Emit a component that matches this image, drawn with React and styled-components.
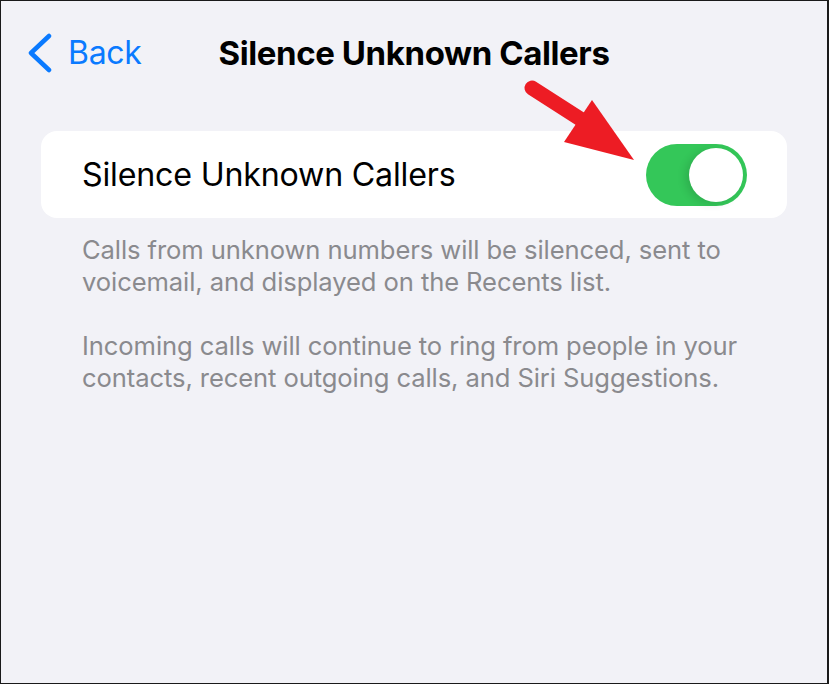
import React from "react";
import styled, { createGlobalStyle } from "styled-components";

const Global = createGlobalStyle`
  html, body { margin: 0; padding: 0; }
  body { background: #f2f2f7; font-family: Inter, "Liberation Sans", sans-serif; }
`;

const Frame = styled.div`
  position: relative;
  box-sizing: border-box;
  width: 829px;
  height: 684px;
  background: #f2f2f7;
  border: 1px solid #1a1a1a;
  border-right-width: 2px;
  display: flex;
  flex-direction: column;
  overflow: hidden;
`;

const NavBar = styled.header`
  display: grid;
  grid-template-columns: 1fr auto 1fr;
  align-items: center;
  height: 103px;
  padding: 0 27px;
`;

const BackButton = styled.button`
  display: flex;
  align-items: center;
  gap: 16px;
  justify-self: start;
  border: 0;
  background: none;
  padding: 0;
  color: #0a7aff;
  font-family: inherit;
  font-size: 32px;
  letter-spacing: -0.3px;
  cursor: pointer;
`;

const Title = styled.h1`
  margin: 0;
  font-size: 33px;
  font-weight: 700;
  letter-spacing: -0.4px;
  color: #000;
`;

const Content = styled.main`
  padding: 27px 40px 0 40px;
`;

const Card = styled.div`
  display: flex;
  align-items: center;
  justify-content: space-between;
  height: 87px;
  background: #fff;
  border-radius: 16px;
  padding: 0 40px 0 41px;
`;

const Label = styled.span`
  font-size: 32.2px;
  letter-spacing: -0.2px;
  color: #000;
`;

const Switch = styled.div`
  position: relative;
  width: 101px;
  height: 62px;
  border-radius: 31px;
  background: ${(p) => (p.$on ? "#34c759" : "#e9e9ea")};
`;

const Knob = styled.div`
  position: absolute;
  top: 4px;
  left: ${(p) => (p.$on ? "43px" : "4px")};
  width: 54px;
  height: 54px;
  border-radius: 50%;
  background: #fff;
  box-shadow: -4px 2px 8px rgba(0, 0, 0, 0.12);
`;

const Footer = styled.div`
  padding: 16px 0 0 41px;
  color: #8a8a8e;
  font-size: 25.6px;
  line-height: 32px;
  letter-spacing: -0.1px;
`;

const Para = styled.p`
  margin: 0 0 32px 0;
  white-space: nowrap;
`;

const Arrow = styled.svg`
  position: absolute;
  left: 0;
  top: 0;
  pointer-events: none;
`;

export default function App() {
  return (
    <>
      <Global />
      <Frame>
        <NavBar>
          <BackButton>
            <svg width="24" height="40" viewBox="0 0 24 40">
              <path
                d="M21 3 L3 20 L21 37"
                fill="none"
                stroke="#0a7aff"
                strokeWidth="4.5"
                strokeLinecap="round"
                strokeLinejoin="round"
              />
            </svg>
            Back
          </BackButton>
          <Title>Silence Unknown Callers</Title>
          <span />
        </NavBar>
        <Content>
          <Card>
            <Label>Silence Unknown Callers</Label>
            <Switch $on>
              <Knob $on />
            </Switch>
          </Card>
          <Footer>
            <Para>
              Calls from unknown numbers will be silenced, sent to
              <br />
              voicemail, and displayed on the Recents list.
            </Para>
            <Para>
              Incoming calls will continue to ring from people in your
              <br />
              contacts, recent outgoing calls, and Siri Suggestions.
            </Para>
          </Footer>
        </Content>
        <Arrow width="829" height="684" viewBox="0 0 829 684">
          <line
            x1="531"
            y1="87"
            x2="584"
            y2="121"
            stroke="#ed1c24"
            strokeWidth="15"
            strokeLinecap="round"
          />
          <polygon points="633,159 563,141 591,99" fill="#ed1c24" />
        </Arrow>
      </Frame>
    </>
  );
}
